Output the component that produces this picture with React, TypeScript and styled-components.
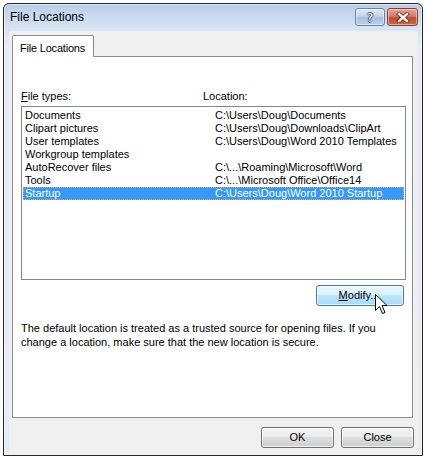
import React from 'react';
import styled, { createGlobalStyle } from 'styled-components';

const uiFont = `"Liberation Sans", Arial, sans-serif`;

const GlobalStyle = createGlobalStyle`
  html, body {
    margin: 0;
    padding: 0;
    background: #ffffff;
  }
  body {
    width: 426px;
    height: 462px;
    overflow: hidden;
    font-family: ${uiFont};
  }
`;

const Desk = styled.div`
  width: 426px;
  height: 462px;
  box-sizing: border-box;
  padding: 3px 0 0 3px;
  background: #ffffff;
`;

const Window = styled.div`
  width: 420px;
  height: 453px;
  box-sizing: border-box;
  display: flex;
  flex-direction: column;
  padding: 0 4px 1px 5px;
  border: 1px solid #262626;
  border-radius: 6px 6px 0 0;
  background: linear-gradient(#b7cee9 0px, #c8daef 12px, #d8e5f3 26px, #e2ebf6 40px, #e4edf7 100%);
  box-shadow: inset 0 0 0 1px rgba(255, 255, 255, 0.55);
`;

const TitleBar = styled.div`
  height: 27px;
  flex: none;
  display: flex;
  align-items: flex-start;
  padding-left: 1px;
`;

const Title = styled.span`
  flex: 1;
  margin-top: 6px;
  font-size: 12px;
  line-height: 15px;
  color: #000;
`;

const Caption = styled.div`
  display: flex;
  gap: 2px;
  margin-top: 4px;
`;

const CaptionButton = styled.div<{ $danger?: boolean }>`
  width: ${(p) => (p.$danger ? 31 : 30)}px;
  height: 18px;
  box-sizing: border-box;
  display: flex;
  align-items: center;
  justify-content: center;
  border: 1px solid ${(p) => (p.$danger ? '#8e3b2c' : '#6d84a3')};
  border-radius: 3px;
  background: ${(p) =>
    p.$danger
      ? 'linear-gradient(#e8a493 0%, #d67b66 45%, #c24a33 55%, #cf6a4d 100%)'
      : 'linear-gradient(#dfe9f5 0%, #c4d5ea 45%, #a9bfdc 55%, #bcd0e8 100%)'};
  box-shadow: inset 0 0 0 1px rgba(255, 255, 255, 0.45);
`;

const HelpGlyph = styled.span`
  font-family: "DejaVu Sans", sans-serif;
  font-size: 13px;
  line-height: 13px;
  color: #ffffff;
  text-shadow: 1px 0 0 #4d5f78, -1px 0 0 #4d5f78, 0 1px 0 #4d5f78, 0 -1px 0 #4d5f78;
`;

const Client = styled.div`
  flex: 1;
  display: flex;
  flex-direction: column;
  padding: 4px 4px 0 3px;
  background: #f0f0f0;
  font-size: 11px;
  color: #000;
`;

const TabStrip = styled.div`
  display: flex;
`;

const Tab = styled.div`
  position: relative;
  z-index: 1;
  height: 22px;
  margin-bottom: -1px;
  box-sizing: border-box;
  padding: 6px 8px 0 7px;
  border: 1px solid #898c95;
  border-bottom: none;
  border-radius: 2px 2px 0 0;
  background: #ffffff;
  line-height: 13px;
  letter-spacing: -0.2px;
`;

const Panel = styled.div`
  width: 401px;
  height: 362px;
  box-sizing: border-box;
  padding: 33px 6px 0 8px;
  border: 1px solid #898c95;
  background: #ffffff;
  display: flex;
  flex-direction: column;
`;

const ColumnHeads = styled.div`
  display: grid;
  grid-template-columns: 182px 1fr;
  line-height: 13px;
`;

const ListBox = styled.div`
  height: 174px;
  margin-top: 3px;
  box-sizing: border-box;
  padding: 2px 1px;
  border: 1px solid #828790;
  background: #ffffff;
`;

const Row = styled.div<{ $selected?: boolean }>`
  display: grid;
  grid-template-columns: 190px 1fr;
  height: 13px;
  line-height: 13px;
  padding-left: 2px;
  white-space: nowrap;
  color: ${(p) => (p.$selected ? '#ffffff' : '#000000')};
  background: ${(p) => (p.$selected ? '#3399ff' : 'transparent')};
  outline: ${(p) => (p.$selected ? '1px dotted #f4a53c' : 'none')};
  outline-offset: -1px;
`;

const ActionRow = styled.div`
  display: flex;
  justify-content: flex-end;
  margin-top: 5px;
  padding-right: 2px;
`;

const PushButton = styled.div<{ $hot?: boolean; $width: number }>`
  position: relative;
  width: ${(p) => p.$width}px;
  height: 21px;
  box-sizing: border-box;
  display: flex;
  align-items: center;
  justify-content: center;
  border: 1px solid ${(p) => (p.$hot ? '#3c7fb1' : '#707070')};
  border-radius: 3px;
  background: ${(p) =>
    p.$hot
      ? 'linear-gradient(#eaf6fd 0%, #d9f0fc 50%, #bee6fd 50%, #a7d9f5 100%)'
      : 'linear-gradient(#f2f2f2 0%, #ebebeb 50%, #dddddd 50%, #cfcfcf 100%)'};
  box-shadow: inset 0 0 0 1px rgba(255, 255, 255, 0.7);
  font-size: 11px;
  line-height: 13px;
`;

const ButtonLabel = styled.span`
  margin-right: 2px;
`;

const Cursor = styled.svg`
  position: absolute;
  left: 58px;
  top: 8px;
  width: 13px;
  height: 21px;
  overflow: visible;
`;

const Note = styled.p`
  margin: 15px 0 0 0;
  line-height: 14px;
`;

const Footer = styled.div`
  display: flex;
  justify-content: flex-end;
  gap: 7px;
  margin-top: 9px;
`;

const fileTypes: [string, string][] = [
  ['Documents', 'C:\\Users\\Doug\\Documents'],
  ['Clipart pictures', 'C:\\Users\\Doug\\Downloads\\ClipArt'],
  ['User templates', 'C:\\Users\\Doug\\Word 2010 Templates'],
  ['Workgroup templates', ''],
  ['AutoRecover files', 'C:\\...\\Roaming\\Microsoft\\Word'],
  ['Tools', 'C:\\...\\Microsoft Office\\Office14'],
  ['Startup', 'C:\\Users\\Doug\\Word 2010 Startup'],
];

export default function App() {
  return (
    <Desk>
      <GlobalStyle />
      <Window>
        <TitleBar>
          <Title>File Locations</Title>
          <Caption>
            <CaptionButton>
              <HelpGlyph>?</HelpGlyph>
            </CaptionButton>
            <CaptionButton $danger>
              <svg width="14" height="11" viewBox="0 0 14 11">
                <path d="M3 2 L11 9 M11 2 L3 9" stroke="#6b2418" strokeWidth="4" strokeLinecap="square" />
                <path d="M3 2 L11 9 M11 2 L3 9" stroke="#ffffff" strokeWidth="2.4" strokeLinecap="square" />
              </svg>
            </CaptionButton>
          </Caption>
        </TitleBar>

        <Client>
          <TabStrip>
            <Tab>File Locations</Tab>
          </TabStrip>
          <Panel>
            <ColumnHeads>
              <span>
                <u>F</u>ile types:
              </span>
              <span>Location:</span>
            </ColumnHeads>
            <ListBox>
              {fileTypes.map(([name, path]) => (
                <Row key={name} $selected={name === 'Startup'}>
                  <span>{name}</span>
                  <span>{path}</span>
                </Row>
              ))}
            </ListBox>
            <ActionRow>
              <PushButton $hot $width={88}>
                <ButtonLabel>
                  <u>M</u>odify...
                </ButtonLabel>
                <Cursor viewBox="0 0 13 21">
                  <path
                    d="M0.5 0.5 L0.5 16.5 L4.5 12.5 L7.5 19.5 L10 18.5 L7 11.5 L12 11.5 Z"
                    fill="#ffffff"
                    stroke="#000000"
                    strokeWidth="1"
                    strokeLinejoin="miter"
                  />
                </Cursor>
              </PushButton>
            </ActionRow>
            <Note>
              The default location is treated as a trusted source for opening files. If you
              <br />
              change a location, make sure that the new location is secure.
            </Note>
          </Panel>
          <Footer>
            <PushButton $width={73}>OK</PushButton>
            <PushButton $width={73}>Close</PushButton>
          </Footer>
        </Client>
      </Window>
    </Desk>
  );
}
